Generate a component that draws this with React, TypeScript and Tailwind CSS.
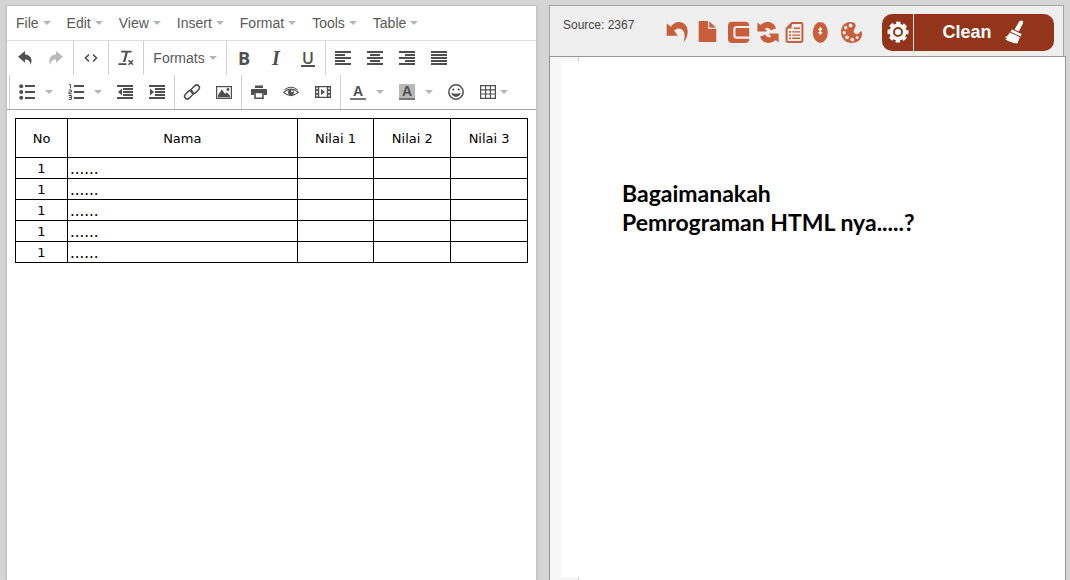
import * as React from 'react'
import { clsx } from 'clsx'

const menus = ['File', 'Edit', 'View', 'Insert', 'Format', 'Tools', 'Table']

const columns = [
  { label: 'No', width: 'w-[52px]' },
  { label: 'Nama', width: 'w-auto' },
  { label: 'Nilai 1', width: 'w-[15%]' },
  { label: 'Nilai 2', width: 'w-[15%]' },
  { label: 'Nilai 3', width: 'w-[15%]' },
]

const rows = [
  { no: '1', nama: '......' },
  { no: '1', nama: '......' },
  { no: '1', nama: '......' },
  { no: '1', nama: '......' },
  { no: '1', nama: '......' },
]

const undoPath = 'M2 6.7L9 1v3.4c5.6.2 8.2 5 5.5 10.6C14.4 11.2 12.6 9.4 9 9.4v3.4z'

const toolIcons = {
  undo: <path d={undoPath} />,
  redo: <path d={undoPath} transform="matrix(-1 0 0 1 17 0)" opacity="0.4" />,
  code: <path d="M6 4.5L2.5 8L6 11.5M10 4.5L13.5 8L10 11.5" fill="none" stroke="currentColor" strokeWidth="1.6" />,
  clear: (
    <>
      <path d="M3.2 0.8H13.6V2.4H9.8L7.2 12H5L7.6 2.4H3.2zM0.5 13.3H8.5V15H0.5z" />
      <path d="M10.5 10.2L15 14.8M15 10.2L10.5 14.8" fill="none" stroke="currentColor" strokeWidth="1.5" />
    </>
  ),
  left: <path d="M0 1h16v2H0zM0 4h10v2H0zM0 7h16v2H0zM0 10h10v2H0zM0 13h16v2H0z" />,
  center: <path d="M0 1h16v2H0zM3 4h10v2H3zM0 7h16v2H0zM3 10h10v2H3zM0 13h16v2H0z" />,
  right: <path d="M0 1h16v2H0zM6 4h10v2H6zM0 7h16v2H0zM6 10h10v2H6zM0 13h16v2H0z" />,
  justify: <path d="M0 1h16v2H0zM0 4h16v2H0zM0 7h16v2H0zM0 10h16v2H0zM0 13h16v2H0z" />,
  bullets: (
    <>
      <circle cx="2.2" cy="2.2" r="2" />
      <circle cx="2.2" cy="8" r="2" />
      <circle cx="2.2" cy="13.8" r="2" />
      <path d="M6 1h10v2H6zM6 7h10v2H6zM6 13h10v2H6z" />
    </>
  ),
  numbers: (
    <>
      <path d="M6 1h10v2H6zM6 7h10v2H6zM6 13h10v2H6z" />
      <path
        d="M1 .6H2.6V4.5M.6 6H3.4V8H1V9.8H3.8M.6 11.5H3.4V15.4H.6M1 13.4H3.4"
        fill="none"
        stroke="currentColor"
      />
    </>
  ),
  outdent: <path d="M0 1h16v2H0zM6 4h10v2H6zM6 7h10v2H6zM6 10h10v2H6zM0 13h16v2H0zM5 4.5v7L1 8z" />,
  indent: <path d="M0 1h16v2H0zM6 4h10v2H6zM6 7h10v2H6zM6 10h10v2H6zM0 13h16v2H0zM1 4.5v7L5 8z" />,
  link: (
    <g fill="none" stroke="currentColor" strokeWidth="1.5" transform="rotate(-45 8 8)">
      <rect x="-1" y="5" width="9.6" height="5.4" rx="2.7" />
      <rect x="7.4" y="5.6" width="9.6" height="5.4" rx="2.7" />
    </g>
  ),
  image: (
    <>
      <path d="M.6 2.6H15.4V14.4H.6z" fill="none" stroke="currentColor" strokeWidth="1.2" />
      <path d="M2 13.2V11L5.8 5.6L9 9.8L10.8 8.4L14 11.4V13.2z" />
      <circle cx="12" cy="5.5" r="1.4" />
    </>
  ),
  print: (
    <>
      <path d="M4 1.5h8v2.6H4zM1 5h14q1 0 1 1v5h-3V9H3v2H0V6q0-1 1-1z" />
      <path d="M4 8.5h8v5.7H4z" fill="#fff" stroke="currentColor" strokeWidth="1.6" />
    </>
  ),
  eye: (
    <>
      <path d="M.6 8.4Q8 1.8 15.4 8.4Q8 14.8 .6 8.4z" fill="none" stroke="currentColor" strokeWidth="1.1" />
      <path d="M1.4 5.8Q8 .6 14.6 5.8" fill="none" stroke="currentColor" />
      <circle cx="8" cy="8.2" r="2.9" />
      <circle cx="9" cy="7.2" r="1" fill="#fff" />
    </>
  ),
  media: (
    <>
      <path
        d="M0 2h16v12H0zM1.2 3.4v1.8h1.6V3.4zM1.2 7v2h1.6V7zM1.2 10.8v1.8h1.6v-1.8zM13.2 3.4v1.8h1.6V3.4zM13.2 7v2h1.6V7zM13.2 10.8v1.8h1.6v-1.8zM4.2 3.3v9.4h7.6V3.3z"
        fillRule="evenodd"
      />
      <path d="M6 5v6l4-3z" />
    </>
  ),
  smile: (
    <>
      <circle cx="8" cy="8" r="7.2" fill="none" stroke="currentColor" strokeWidth="1.5" />
      <circle cx="5.3" cy="5.5" r="1.1" />
      <circle cx="10.7" cy="5.5" r="1.1" />
      <path d="M3.2 8.8Q8 10.8 12.8 8.8Q11.6 12.9 8 12.9Q4.4 12.9 3.2 8.8z" />
    </>
  ),
  table: (
    <path
      d="M.6 1.6H15.4V14.4H.6zM.6 5.8H15.4M.6 10H15.4M5.6 1.6V14.4M10.4 1.6V14.4"
      fill="none"
      stroke="currentColor"
      strokeWidth="1.2"
    />
  ),
}

type ToolName = keyof typeof toolIcons

function Caret() {
  return <span aria-hidden className="border-x-4 border-t-4 border-x-transparent border-t-[#b5b5b5]" />
}

function ToolButton({ icon, label, children, className }: {
  icon?: ToolName
  label: string
  children?: React.ReactNode
  className?: string
}) {
  return (
    <button type="button" aria-label={label} className={clsx('flex h-full min-w-8 items-center justify-center', className)}>
      {icon && (
        <svg className="h-4 w-4 overflow-visible" viewBox="0 0 16 16" fill="currentColor">
          {toolIcons[icon]}
        </svg>
      )}
      {children}
    </button>
  )
}

function SplitCaret({ label }: { label: string }) {
  return (
    <button type="button" aria-label={label} className="flex h-full w-[17px] items-center pl-0.5">
      <Caret />
    </button>
  )
}

function Group({ first, children }: { first?: boolean; children: React.ReactNode }) {
  return <div className={clsx('flex h-full px-px', !first && 'border-l border-[#d0d0d0]')}>{children}</div>
}

function Editor() {
  return (
    <section className="border border-b-0 border-[#c4c4c4] bg-white shadow-sm">
      <nav className="flex h-[35px] items-center border-b border-[#dcdcdc] pl-px text-sm text-[#595959]">
        {menus.map((menu) => (
          <button key={menu} type="button" className="flex items-center gap-1 px-2">
            {menu}
            <Caret />
          </button>
        ))}
      </nav>

      <div className="border-b border-[#a5a5a5] text-[#4f4f4f]">
        <div className="flex h-[34px]">
          <Group first>
            <ToolButton icon="undo" label="Undo" />
            <ToolButton icon="redo" label="Redo" />
          </Group>
          <Group>
            <ToolButton icon="code" label="Source code" />
          </Group>
          <Group>
            <ToolButton icon="clear" label="Clear formatting" />
          </Group>
          <Group>
            <ToolButton label="Formats" className="w-20 gap-1 text-sm text-[#595959]">
              Formats
              <Caret />
            </ToolButton>
          </Group>
          <Group>
            <ToolButton label="Bold" className="font-['Open_Sans',sans-serif] text-lg font-bold">B</ToolButton>
            <ToolButton label="Italic" className="font-['Liberation_Serif',serif] text-xl font-bold italic">I</ToolButton>
            <ToolButton label="Underline" className="pt-px">
              <span className="border-b-2 border-[#4f4f4f] px-px font-['Open_Sans',sans-serif] text-base leading-[14px] font-semibold">U</span>
            </ToolButton>
          </Group>
          <Group>
            <ToolButton icon="left" label="Align left" />
            <ToolButton icon="center" label="Align center" />
            <ToolButton icon="right" label="Align right" />
            <ToolButton icon="justify" label="Justify" />
          </Group>
        </div>

        <div className="flex h-[34px] pl-0.5">
          <Group>
            <ToolButton icon="bullets" label="Bullet list" />
            <SplitCaret label="Bullet styles" />
            <ToolButton icon="numbers" label="Numbered list" />
            <SplitCaret label="Number styles" />
            <ToolButton icon="outdent" label="Decrease indent" />
            <ToolButton icon="indent" label="Increase indent" />
          </Group>
          <Group>
            <ToolButton icon="link" label="Insert link" />
            <ToolButton icon="image" label="Insert image" />
          </Group>
          <Group>
            <ToolButton icon="print" label="Print" />
            <ToolButton icon="eye" label="Preview" />
            <ToolButton icon="media" label="Insert video" />
          </Group>
          <Group>
            <ToolButton label="Text color">
              <span className="h-4 w-4 border-b-2 border-[#777] text-sm leading-[14px] font-bold">A</span>
            </ToolButton>
            <SplitCaret label="Text colors" />
            <ToolButton label="Background color">
              <span className="h-4 w-4 border-b-2 border-[#777] bg-[#b8b8b8] text-sm leading-[14px] font-bold">A</span>
            </ToolButton>
            <SplitCaret label="Background colors" />
            <ToolButton icon="smile" label="Emoticons" />
            <ToolButton icon="table" label="Table" className="gap-1 px-2">
              <Caret />
            </ToolButton>
          </Group>
        </div>
      </div>

      <div className="p-2">
        <table className="w-full table-fixed border-collapse font-['DejaVu_Sans',sans-serif] text-[13px] leading-4 text-black">
          <thead>
            <tr className="h-[39px]">
              {columns.map((column) => (
                <th key={column.label} className={clsx('border border-black pt-0.5 font-normal', column.width)}>
                  {column.label}
                </th>
              ))}
            </tr>
          </thead>
          <tbody>
            {rows.map((row, i) => (
              <tr key={i} className="h-[21px]">
                <td className="border border-black pt-0.5 text-center">{row.no}</td>
                <td className="border border-black px-0.5 pt-0.5 text-[15px]">{row.nama}</td>
                <td className="border border-black" />
                <td className="border border-black" />
                <td className="border border-black" />
              </tr>
            ))}
          </tbody>
        </table>
      </div>
    </section>
  )
}

const actions = [
  {
    label: 'Undo',
    width: 22,
    art: (
      <path d="M.7 3.6L5 6.7C7 3.5 10 2 13 2C18 2 21.7 6 21.7 11.5C21.7 16 20 20 17.3 22.3C18.6 19 19.2 15.5 18 12.4C17 9.3 14.2 8 11.6 8.6L8 10.6L11.9 15.7H.7z" />
    ),
  },
  {
    label: 'New document',
    width: 22,
    art: <path d="M2.7 1H12V8.8H20.3V22H2.7zM13.2 1.2L20 7.6H13.2z" />,
  },
  {
    label: 'Compress',
    width: 24,
    art: (
      <>
        <rect x="2" y="1.7" width="21.2" height="21.3" rx="4" />
        <path d="M24 7H10.6Q8.4 7 8.4 9V15.5Q8.4 17.6 10.6 17.6H24" fill="none" stroke="#efefef" strokeWidth="2.2" />
      </>
    ),
  },
  {
    label: 'Repeat',
    width: 20,
    art: (
      <>
        <path d="M-.6 2.6L2.4 5C7.6.4 15.4 1.2 18 8.2L12.8 10.4C11.4 7.6 9.2 7 6.8 8.6L9.2 11.6H-.6z" />
        <path d="M20.6 22.4L17.6 20C12.4 24.6 4.6 23.8 2 16.8L7.2 14.6C8.6 17.4 10.8 18 13.2 16.4L10.8 13.4H20.6z" />
      </>
    ),
  },
  {
    label: 'Demo text',
    width: 18,
    art: (
      <>
        <path d="M6 3H15Q16.4 3 16.4 4.4V20.6Q16.4 22 15 22H1.8Q.6 22 .6 20.6V8.4z" fill="none" stroke="currentColor" strokeWidth="2" />
        <path d="M5.6 3.5V8.6H1.2V7.4zM8 7.6H14V9H8zM3.2 11H5V12.8H3.2zM6.2 11.2H14V12.6H6.2zM3.2 14.2H5V16H3.2zM6.2 14.4H14V15.8H6.2zM3.2 17.4H5V19.2H3.2zM6.2 17.6H14V19H6.2z" />
      </>
    ),
  },
  {
    label: 'Scroll',
    width: 16,
    art: (
      <>
        <ellipse cx="8.3" cy="12.4" rx="7.5" ry="10.5" />
        <path d="M8.3 6.8L10.6 10H9.1V12H10.6L8.3 15.2L6 12H7.5V10H6z" fill="#fff" />
      </>
    ),
  },
  {
    label: 'Colors',
    width: 26,
    art: (
      <>
        <path d="M14.5 2C8.4 2 5 6.7 5 12.2C5 18.2 9.6 23 15.7 23C21.7 23 26 19.2 26 13.5C26 12 25.6 11.2 25 11.2C23.6 11.2 23.5 14.2 21 14.2C18.6 14.2 17.4 12.6 17.7 10.6C18 8.4 19.8 7.8 19.7 5.4C19.6 3 17.3 2 14.5 2z" />
        <g fill="#efefef">
          <circle cx="14.6" cy="5.5" r="1.9" />
          <circle cx="9.7" cy="7.8" r="1.7" />
          <circle cx="8.2" cy="12.7" r="1.7" />
          <circle cx="11" cy="17.3" r="1.9" />
          <circle cx="16.3" cy="19.6" r="1.9" />
          <circle cx="21.2" cy="17.4" r="1.5" />
        </g>
      </>
    ),
  },
]

function Gear() {
  return (
    <svg className="h-6 w-6" viewBox="0 0 24 24" fill="#fff">
      <circle cx="12" cy="12" r="8.6" />
      <circle cx="12" cy="12" r="9" fill="none" stroke="#fff" strokeWidth="3" strokeDasharray="4.27 2.8" strokeDashoffset="2.1" />
      <circle cx="12" cy="12" r="4" stroke="#93351b" strokeWidth="2" />
    </svg>
  )
}

function Broom() {
  return (
    <svg className="h-6 w-[22px]" viewBox="0 0 22 24" fill="#fff">
      <path d="M15.2 1.4Q17 -.4 19.2 1.2L18.9 3.6L14.9 11.6L10.6 9.5z" />
      <path d="M8 9.6L17.6 14L16.6 16.4L6.6 11.8z" />
      <path d="M5.8 12.6L16 17.2C14.8 19.4 14.2 21.4 13.6 23.4C8.6 23 4.2 21.4 1.2 19.2L3.4 18.2L.6 17.6C3 16.6 4.8 14.8 5.8 12.6z" />
    </svg>
  )
}

function Source() {
  return (
    <section className="flex flex-col">
      <header className="mr-0.5 flex h-[51px] items-center border border-b-0 border-[#a3a3a3] bg-[#efefef] pt-0.5 pr-[9px] pl-[13px]">
        <span className="pb-[15px] text-xs text-[#444]">Source: 2367</span>
        <div className="ml-auto flex gap-2 text-[#c85f3a]">
          {actions.map((action) => (
            <button key={action.label} type="button" aria-label={action.label}>
              <svg className="block overflow-visible" width={action.width} height="24" viewBox={`0 0 ${action.width} 24`} fill="currentColor">
                {action.art}
              </svg>
            </button>
          ))}
        </div>
        <div className="ml-5 flex h-[37px] overflow-hidden rounded-[10px] bg-[#93351b] text-white">
          <button type="button" aria-label="Settings" className="flex w-8 items-center justify-center border-r border-[#f3ddd5]">
            <Gear />
          </button>
          <button type="button" className="flex w-[140px] items-center justify-center gap-3 text-lg font-bold">
            Clean
            <Broom />
          </button>
        </div>
      </header>

      <div className="flex flex-1 border border-b-0 border-[#959595] bg-white">
        <div className="w-[11px] bg-[#f7f7f7]" />
        <div className="flex flex-1 flex-col">
          <div className="h-1 w-[18px] border-r border-[#d0d0d0] bg-[#f7f7f7]" />
          <p className="px-[61px] pt-[118px] pb-8 font-['Lato',sans-serif] text-[23px] leading-[29px] font-bold text-black">
            Bagaimanakah
            <br />
            Pemrograman HTML nya.....?
          </p>
          <div className="mt-auto h-[3px] w-[18px] border-r border-[#d0d0d0] bg-[#f7f7f7]" />
        </div>
      </div>
    </section>
  )
}

export default function App() {
  return (
    <main className="grid min-h-screen grid-cols-[531fr_517fr] gap-3 bg-[#d5d5d5] pt-[5px] pr-1 pl-1.5 font-['Liberation_Sans',Arial,sans-serif]">
      <Editor />
      <Source />
    </main>
  )
}
